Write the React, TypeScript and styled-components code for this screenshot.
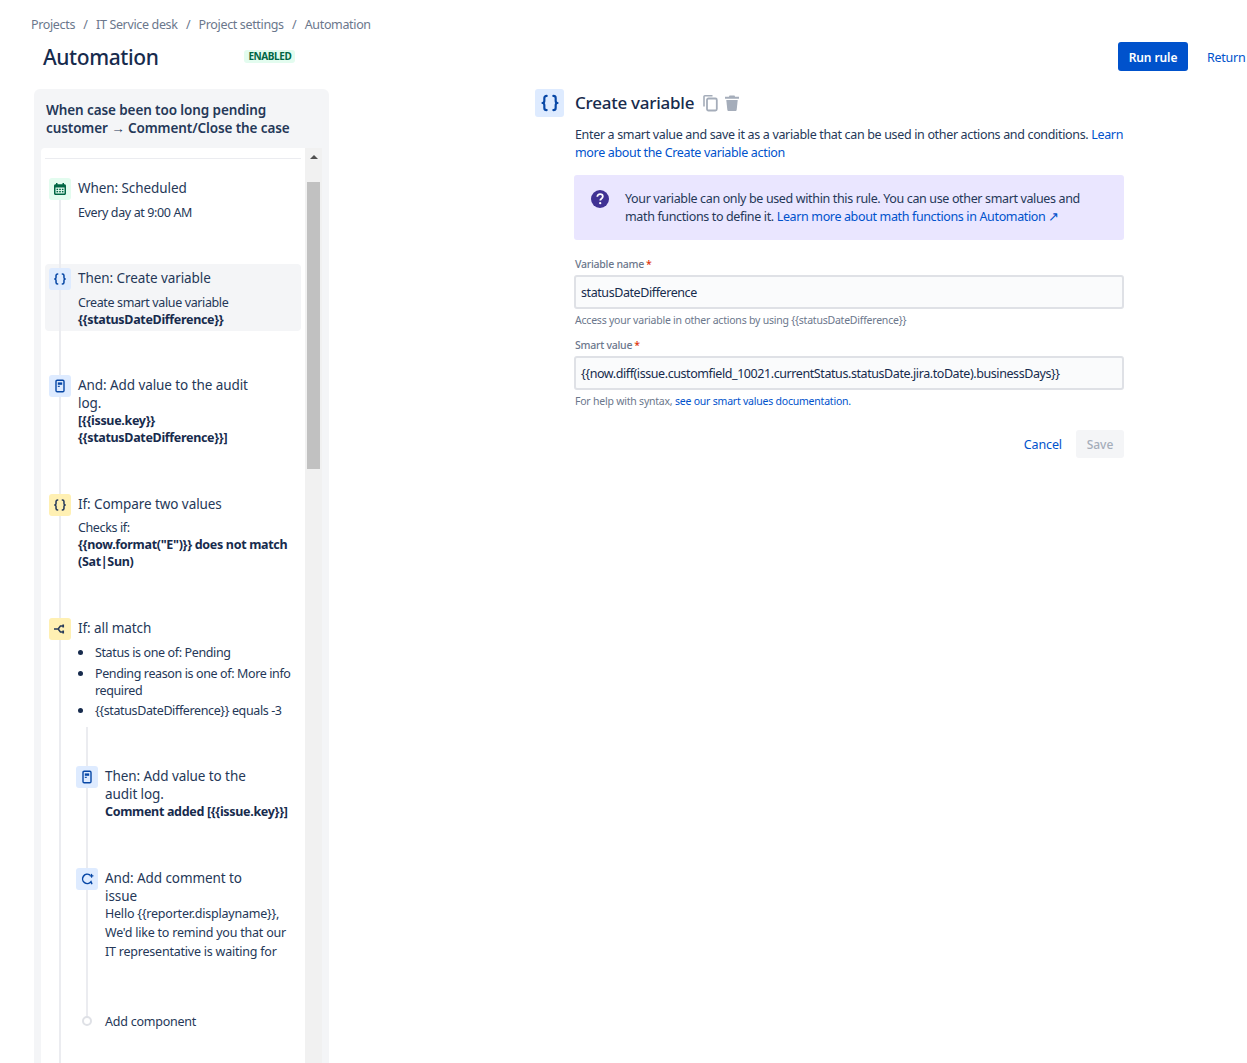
import React from "react";
import styled, { createGlobalStyle } from "styled-components";

const GlobalStyle = createGlobalStyle`
  html, body {
    margin: 0;
    padding: 0;
    background: #fff;
    font-family: "Noto Sans", "Open Sans", sans-serif;
    color: #172b4d;
  }
  * { box-sizing: border-box; }
`;

const Page = styled.div`
  height: 100vh;
  overflow: hidden;
  display: flex;
  flex-direction: column;
  padding-top: 16px;
`;

const Breadcrumbs = styled.nav`
  display: flex;
  padding-left: 31px;
  height: 18px;
  line-height: 18px;
  font-size: 12.5px;
  letter-spacing: -0.35px;
  color: #6b778c;
`;

const Slash = styled.span`
  width: 21px;
  text-align: center;
`;

const HeaderRow = styled.header`
  display: flex;
  align-items: center;
  height: 29px;
  margin-top: 8px;
  padding-left: 43px;
`;

const PageTitle = styled.h1`
  margin: 0;
  padding-top: 1px;
  font-size: 21px;
  font-weight: 500;
  line-height: 28px;
  letter-spacing: -0.4px;
  color: #172b4d;
`;

const Badge = styled.span`
  margin-left: 86px;
  padding: 0 4px;
  height: 13px;
  line-height: 13px;
  border-radius: 3px;
  background: #e3fcef;
  color: #006644;
  font-size: 10px;
  font-weight: 700;
  letter-spacing: -0.4px;
`;

const RunButton = styled.button`
  margin-left: auto;
  width: 70px;
  height: 29px;
  padding: 1px 0 0;
  border: 0;
  border-radius: 3px;
  background: #0052cc;
  color: #fff;
  font: 600 12px "Noto Sans", sans-serif;
  letter-spacing: -0.1px;
`;

const ReturnLink = styled.a`
  width: 40px;
  margin: 0 0 0 19px;
  padding-top: 1px;
  font-size: 12.5px;
  letter-spacing: -0.25px;
  color: #0052cc;
  white-space: nowrap;
`;

const Main = styled.main`
  flex: 1;
  min-height: 0;
  display: flex;
  gap: 206px;
  margin-top: 18px;
  padding-left: 34px;
`;

const RulePanel = styled.aside`
  width: 295px;
  display: flex;
  flex-direction: column;
  padding: 12px 7px 0;
  border-radius: 6px 6px 0 0;
  background: #f4f5f7;
`;

const RuleName = styled.h2`
  margin: 0 0 11px 5px;
  font-size: 13.5px;
  font-weight: 600;
  line-height: 18px;
  letter-spacing: -0.1px;
  color: #253858;
`;

const ScrollArea = styled.div`
  flex: 1;
  min-height: 0;
  display: flex;
`;

const Steps = styled.div`
  position: relative;
  width: 264px;
  display: flex;
  flex-direction: column;
  gap: 40px;
  padding-top: 10px;
  background: #fff;
  border-radius: 4px 0 0 0;

  &::before {
    content: "";
    position: absolute;
    left: 18px;
    top: 50px;
    bottom: 0;
    width: 2px;
    background: #ebecf0;
  }
`;

const Divider = styled.hr`
  height: 1px;
  margin: 0 4px -25px;
  border: 0;
  background: #ebecf0;
`;

const Scrollbar = styled.div`
  width: 17px;
  background: #f1f1f1;
  padding: 0 2px;
`;

const ScrollArrow = styled.div`
  width: 0;
  height: 0;
  margin: 7px auto 0;
  border-left: 4px solid transparent;
  border-right: 4px solid transparent;
  border-bottom: 4px solid #505050;
`;

const ScrollThumb = styled.div`
  height: 287px;
  margin-top: 23px;
  background: #c1c1c1;
`;

const Step = styled.div<{ $active?: boolean }>`
  display: flex;
  gap: 7px;
  margin: 0 4px;
  padding: 4px;
  border-radius: 4px;
  background: ${(p) => (p.$active ? "#f4f5f7" : "transparent")};
`;

const IconTile = styled.div<{ $tone: "green" | "blue" | "yellow" }>`
  position: relative;
  z-index: 1;
  flex: none;
  width: 22px;
  height: 22px;
  display: flex;
  align-items: center;
  justify-content: center;
  border-radius: 3px;
  background: ${(p) =>
    p.$tone === "green" ? "#e3fcef" : p.$tone === "blue" ? "#deebff" : "#fff0b3"};
  color: ${(p) =>
    p.$tone === "green" ? "#006644" : p.$tone === "blue" ? "#0747a6" : "#253858"};
`;

const StepBody = styled.div`
  min-width: 0;
  padding-top: 1px;
  font-size: 12.5px;
  line-height: 17px;
  letter-spacing: -0.38px;
  color: #253858;

  b {
    font-weight: 700;
    letter-spacing: -0.32px;
    color: #172b4d;
  }
`;

const StepTitle = styled.div<{ $max?: number; $gap?: number }>`
  max-width: ${(p) => p.$max ?? 190}px;
  margin-bottom: ${(p) => p.$gap ?? 0}px;
  font-size: 13.5px;
  line-height: 18px;
  letter-spacing: -0.08px;
  color: #253858;
`;

const TextBlock = styled.div`
  margin-bottom: -1px;
`;

const Conditions = styled.ul`
  margin: 0;
  padding: 0 0 0 17px;
  list-style: none;

  li {
    position: relative;
  }

  li + li {
    margin-top: 3.5px;
  }

  li::before {
    content: "";
    position: absolute;
    left: -17px;
    top: 6px;
    width: 5px;
    height: 5px;
    border-radius: 50%;
    background: #172b4d;
  }
`;

const Comment = styled.div`
  margin-top: -1px;
  line-height: 19px;
  letter-spacing: -0.22px;
`;

const Nested = styled.div`
  position: relative;
  display: flex;
  flex-direction: column;
  gap: 40px;
  margin: -1px 0 0 27px;

  &::before {
    content: "";
    position: absolute;
    left: 18px;
    top: -35px;
    bottom: 8px;
    width: 2px;
    background: #ebecf0;
  }
`;

const AddRow = styled.div`
  display: flex;
  align-items: center;
  height: 20px;
  margin: 6px 4px 0;
  padding-left: 4px;
  font-size: 12.5px;
  letter-spacing: -0.23px;
  color: #253858;
`;

const AddDot = styled.span`
  position: relative;
  z-index: 1;
  width: 10px;
  height: 10px;
  margin: 0 13px 0 6px;
  border: 2px solid #dfe1e6;
  border-radius: 50%;
  background: #fff;
`;

const Editor = styled.section`
  width: 589px;
`;

const EditorHead = styled.div`
  display: flex;
  align-items: center;
  height: 28px;
`;

const HeadTile = styled.div`
  width: 29px;
  height: 28px;
  margin-right: 11px;
  display: flex;
  align-items: center;
  justify-content: center;
  border-radius: 3px;
  background: #deebff;
  color: #0747a6;
`;

const EditorTitle = styled.h3`
  margin: 0 8px 0 0;
  font-size: 17px;
  font-weight: 500;
  line-height: 28px;
  letter-spacing: -0.25px;
  color: #172b4d;
`;

const GhostIcon = styled.span`
  display: flex;
  margin-right: 5px;
  color: #a5adba;
`;

const EditorBody = styled.div`
  margin-left: 39px;
`;

const Intro = styled.p`
  margin: 9px 0 13px 1px;
  font-size: 12.5px;
  line-height: 18px;
  letter-spacing: -0.34px;
  color: #253858;
`;

const Link = styled.a`
  color: #0052cc;
`;

const Callout = styled.div`
  display: flex;
  gap: 15px;
  height: 65px;
  padding: 14px 16px 0;
  border-radius: 3px;
  background: #eae6ff;
  font-size: 12.5px;
  line-height: 18px;
  letter-spacing: -0.36px;
  color: #253858;
`;

const CalloutIcon = styled.span`
  flex: none;
  width: 20px;
  height: 20px;
  color: #403294;
`;

const CalloutText = styled.div`
  padding-top: 1px;
`;

const FieldLabel = styled.label<{ $first?: boolean }>`
  display: block;
  margin: ${(p) => (p.$first ? 16 : 9)}px 0 0 1px;
  font-size: 10.5px;
  font-weight: 500;
  line-height: 16px;
  letter-spacing: -0.25px;
  color: #6b778c;

  i {
    margin-left: 2px;
    font-style: normal;
    color: #de350b;
  }
`;

const Input = styled.div`
  height: 34px;
  margin-top: 3px;
  padding: 0 5px;
  border: 2px solid #dfe1e6;
  border-radius: 3px;
  background: #fafbfc;
  font-size: 12.5px;
  line-height: 32px;
  letter-spacing: -0.42px;
  color: #172b4d;
  white-space: nowrap;
`;

const Hint = styled.div`
  margin: 3px 0 0 1px;
  font-size: 10.5px;
  line-height: 16px;
  letter-spacing: -0.22px;
  color: #6b778c;
`;

const Actions = styled.div`
  display: flex;
  justify-content: flex-end;
  align-items: center;
  gap: 14px;
  margin-top: 21px;
`;

const CancelButton = styled.a`
  font-size: 12.5px;
  letter-spacing: -0.1px;
  color: #0052cc;
`;

const SaveButton = styled.button`
  width: 48px;
  height: 28px;
  border: 0;
  border-radius: 3px;
  background: #f4f5f7;
  color: #a5adba;
  font: 500 12px "Noto Sans", sans-serif;
`;

const Braces = ({ size = 14 }: { size?: number }) => (
  <svg width={size} height={size} viewBox="0 0 24 24" fill="none" stroke="currentColor" strokeWidth="2.6" strokeLinecap="round" strokeLinejoin="round">
    <path d="M8 3.5c-1.8 0-2.8 1-2.8 2.6v3.2c0 1.4-.9 2.7-2.2 2.7 1.3 0 2.2 1.3 2.2 2.7v3.2c0 1.6 1 2.6 2.8 2.6" />
    <path d="M16 3.5c1.8 0 2.8 1 2.8 2.6v3.2c0 1.4.9 2.7 2.2 2.7-1.3 0-2.2 1.3-2.2 2.7v3.2c0 1.6-1 2.6-2.8 2.6" />
  </svg>
);

const CalendarIcon = () => (
  <svg width="14" height="14" viewBox="0 0 14 14" fill="currentColor">
    <path d="M3 1h1.500v1.200h5V1H11v1.200h.5c.8 0 1.500.7 1.500 1.500v7.800c0 .8-.7 1.500-1.500 1.500h-9c-.8 0-1.500-.7-1.500-1.500V3.700c0-.8.7-1.500 1.500-1.500H3V1zm-.5 4.500v6h9v-6h-9z" />
    <rect x="3.500" y="6.700" width="1.600" height="1.400" />
    <rect x="6.200" y="6.700" width="1.600" height="1.400" />
    <rect x="8.900" y="6.700" width="1.600" height="1.400" />
    <rect x="3.500" y="9" width="1.600" height="1.400" />
    <rect x="6.200" y="9" width="1.600" height="1.400" />
    <rect x="8.900" y="9" width="1.600" height="1.400" />
  </svg>
);

const AuditIcon = () => (
  <svg width="14" height="14" viewBox="0 0 14 14" fill="none">
    <rect x="3" y="1.200" width="8" height="11.600" rx="1.200" stroke="currentColor" strokeWidth="1.400" />
    <rect x="4.800" y="3.400" width="4.400" height="2.400" fill="currentColor" />
    <rect x="4.800" y="6.800" width="2" height="1.100" fill="currentColor" />
  </svg>
);

const BranchIcon = () => (
  <svg width="14" height="14" viewBox="0 0 14 14" fill="none" stroke="currentColor" strokeWidth="1.500">
    <path d="M1 7h4.200l2.200-3h3.200M5.200 7l2.200 3h3.200" />
    <path d="M10.200 2.400v3.200M10.200 8.400v3.200" strokeWidth="1.700" />
  </svg>
);

const CommentLoopIcon = () => (
  <svg width="14" height="14" viewBox="0 0 14 14" fill="none" stroke="currentColor" strokeWidth="1.500" strokeLinecap="round">
    <path d="M9.800 2.900A4.700 4.700 0 1 0 11 9.800l.8 1.800" />
    <path d="M11.600 2.400v2.800M10.200 3.800H13" strokeWidth="1.200" />
  </svg>
);

const CopyIcon = () => (
  <svg width="17" height="18" viewBox="0 0 17 18" fill="none" stroke="currentColor" strokeWidth="1.600">
    <path d="M2 12.500V2.600c0-.5.4-.9.9-.9h7.600" />
    <rect x="5" y="4.500" width="9.800" height="12" rx="1.400" strokeWidth="1.800" />
  </svg>
);

const TrashIcon = () => (
  <svg width="16" height="18" viewBox="0 0 16 18" fill="currentColor">
    <path d="M5.500 1.500h5l.6 1.300h3.900v2H1v-2h3.900l.6-1.300z" />
    <path d="M2.300 6h11.400l-1 9.800c-.1.8-.7 1.200-1.400 1.200H4.700c-.7 0-1.300-.4-1.400-1.200L2.300 6z" />
  </svg>
);

const QuestionIcon = () => (
  <svg width="20" height="20" viewBox="0 0 20 20">
    <circle cx="10" cy="10" r="9" fill="currentColor" />
    <path d="M7.300 7.800c0-1.600 1.200-2.600 2.800-2.600 1.600 0 2.700 1 2.700 2.300 0 1-.5 1.600-1.400 2.200-.8.500-1.100.9-1.100 1.700" fill="none" stroke="#fff" strokeWidth="1.800" />
    <circle cx="10.200" cy="14.200" r="1.150" fill="#fff" />
  </svg>
);

const App = () => (
  <Page>
    <GlobalStyle />
    <Breadcrumbs>
      <span>Projects</span>
      <Slash>/</Slash>
      <span>IT Service desk</span>
      <Slash>/</Slash>
      <span>Project settings</span>
      <Slash>/</Slash>
      <span>Automation</span>
    </Breadcrumbs>

    <HeaderRow>
      <PageTitle>Automation</PageTitle>
      <Badge>ENABLED</Badge>
      <RunButton>Run rule</RunButton>
      <ReturnLink>Return</ReturnLink>
    </HeaderRow>

    <Main>
      <RulePanel>
        <RuleName>
          When case been too long pending
          <br />
          customer → Comment/Close the case
        </RuleName>
        <ScrollArea>
          <Steps>
            <Divider />
            <Step>
              <IconTile $tone="green">
                <CalendarIcon />
              </IconTile>
              <StepBody>
                <StepTitle $gap={7}>When: Scheduled</StepTitle>
                <TextBlock>Every day at 9:00 AM</TextBlock>
              </StepBody>
            </Step>

            <Step $active>
              <IconTile $tone="blue">
                <Braces />
              </IconTile>
              <StepBody>
                <StepTitle $gap={7}>Then: Create variable</StepTitle>
                <TextBlock>
                  Create smart value variable
                  <br />
                  <b>{"{{statusDateDifference}}"}</b>
                </TextBlock>
              </StepBody>
            </Step>

            <Step>
              <IconTile $tone="blue">
                <AuditIcon />
              </IconTile>
              <StepBody>
                <StepTitle>And: Add value to the audit log.</StepTitle>
                <b>{"[{{issue.key}}"}</b>
                <br />
                <b>{"{{statusDateDifference}}]"}</b>
              </StepBody>
            </Step>

            <Step>
              <IconTile $tone="yellow">
                <Braces />
              </IconTile>
              <StepBody>
                <StepTitle $gap={6}>If: Compare two values</StepTitle>
                Checks if:
                <br />
                <b>{'{{now.format("E")}} does not match (Sat|Sun)'}</b>
              </StepBody>
            </Step>

            <Step>
              <IconTile $tone="yellow">
                <BranchIcon />
              </IconTile>
              <StepBody>
                <StepTitle $gap={7}>If: all match</StepTitle>
                <Conditions>
                  <li>Status is one of: Pending</li>
                  <li>Pending reason is one of: More info required</li>
                  <li>{"{{statusDateDifference}} equals -3"}</li>
                </Conditions>
              </StepBody>
            </Step>

            <Nested>
              <Step>
                <IconTile $tone="blue">
                  <AuditIcon />
                </IconTile>
                <StepBody>
                  <StepTitle $max={160}>Then: Add value to the audit log.</StepTitle>
                  <b>{"Comment added [{{issue.key}}]"}</b>
                </StepBody>
              </Step>

              <Step>
                <IconTile $tone="blue">
                  <CommentLoopIcon />
                </IconTile>
                <StepBody>
                  <StepTitle $max={160}>And: Add comment to issue</StepTitle>
                  <Comment>
                    {"Hello {{reporter.displayname}},"}
                    <br />
                    We'd like to remind you that our
                    <br />
                    IT representative is waiting for
                  </Comment>
                </StepBody>
              </Step>

              <AddRow>
                <AddDot />
                Add component
              </AddRow>
            </Nested>
          </Steps>
          <Scrollbar>
            <ScrollArrow />
            <ScrollThumb />
          </Scrollbar>
        </ScrollArea>
      </RulePanel>

      <Editor>
        <EditorHead>
          <HeadTile>
            <Braces size={20} />
          </HeadTile>
          <EditorTitle>Create variable</EditorTitle>
          <GhostIcon>
            <CopyIcon />
          </GhostIcon>
          <GhostIcon>
            <TrashIcon />
          </GhostIcon>
        </EditorHead>
        <EditorBody>
          <Intro>
            Enter a smart value and save it as a variable that can be used in other actions and
            conditions. <Link>Learn more about the Create variable action</Link>
          </Intro>
          <Callout>
            <CalloutIcon>
              <QuestionIcon />
            </CalloutIcon>
            <CalloutText>
              Your variable can only be used within this rule. You can use other smart values and
              <br />
              math functions to define it.{" "}
              <Link>Learn more about math functions in Automation ↗</Link>
            </CalloutText>
          </Callout>
          <FieldLabel $first>
            Variable name<i>*</i>
          </FieldLabel>
          <Input>statusDateDifference</Input>
          <Hint>{"Access your variable in other actions by using {{statusDateDifference}}"}</Hint>
          <FieldLabel>
            Smart value<i>*</i>
          </FieldLabel>
          <Input>{"{{now.diff(issue.customfield_10021.currentStatus.statusDate.jira.toDate).businessDays}}"}</Input>
          <Hint>
            For help with syntax, <Link>see our smart values documentation.</Link>
          </Hint>
          <Actions>
            <CancelButton>Cancel</CancelButton>
            <SaveButton>Save</SaveButton>
          </Actions>
        </EditorBody>
      </Editor>
    </Main>
  </Page>
);

export default App;
